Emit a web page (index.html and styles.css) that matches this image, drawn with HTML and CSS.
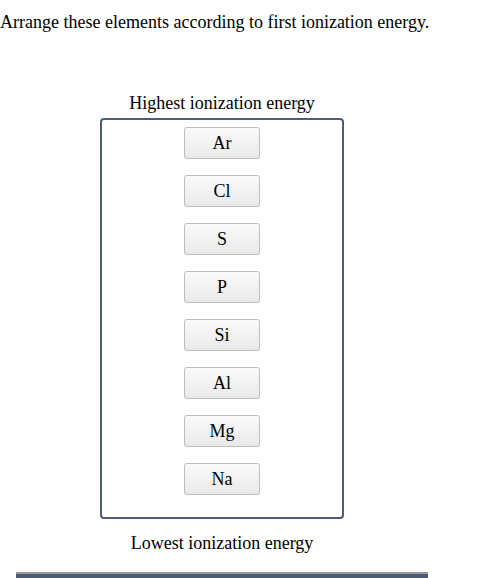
FILE: index.html
```html
<!DOCTYPE html>
<html lang="en">
<head>
    <meta charset="UTF-8">
    <meta name="viewport" content="width=device-width, initial-scale=1.0">
    <title>Ionization Energy</title>
    <link rel="stylesheet" href="styles.css">
</head>
<body>
    <p class="prompt">Arrange these elements according to first ionization energy.</p>

    <div class="ranking">
        <div class="label">Highest ionization energy</div>
        <div class="bucket">
            <button class="chip">Ar</button>
            <button class="chip">Cl</button>
            <button class="chip">S</button>
            <button class="chip">P</button>
            <button class="chip">Si</button>
            <button class="chip">Al</button>
            <button class="chip">Mg</button>
            <button class="chip">Na</button>
        </div>
        <div class="label">Lowest ionization energy</div>
    </div>

    <div class="footer-bar"></div>
</body>
</html>
```

FILE: styles.css
```css
body {
    font-family: "Liberation Serif", "Times New Roman", serif;
    margin: 0;
    background-color: #fff;
    color: #000;
}

.prompt {
    font-size: 18px;
    margin: 12px 0 0 0;
    line-height: 21px;
}

.ranking {
    width: 244px;
    margin: 60px 0 0 100px;
}

.label {
    font-size: 18px;
    text-align: center;
    line-height: 21px;
}

.ranking .label:first-child {
    margin-bottom: 4px;
}

.ranking .label:last-child {
    margin-top: 14px;
}

.bucket {
    border: 2px solid #4d5d77;
    border-radius: 4px;
    height: 401px;
    padding-top: 7px;
    display: flex;
    flex-direction: column;
    align-items: center;
    gap: 16px;
    box-sizing: border-box;
}

.chip {
    width: 76px;
    height: 32px;
    font-family: "Liberation Serif", "Times New Roman", serif;
    font-size: 18px;
    color: #000;
    border: 1px solid #bdbdbd;
    border-radius: 3px;
    background: linear-gradient(#fbfbfb, #e9e9e9);
    padding: 0;
    cursor: pointer;
}

.footer-bar {
    margin: 18px 0 0 16px;
    width: 412px;
    height: 10px;
    border-top: 2px solid #9a9a9a;
    background-color: #4b5b74;
}
```
